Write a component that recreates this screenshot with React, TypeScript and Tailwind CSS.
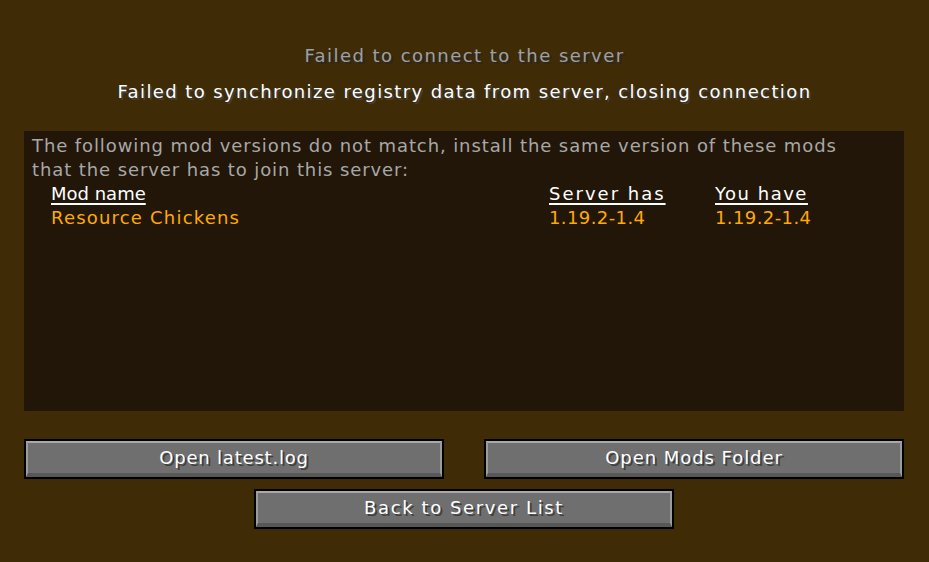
import type React from "react"

const shadowWhite = "[text-shadow:2px_2px_0_#3f3f3f]"

function McButton({ label, track, className }: { label: string; track: string; className?: string }) {
  return (
    <div className={"h-[40px] w-[420px] border-2 border-black bg-black " + (className ?? "")}>
      <div className="flex h-full items-center justify-center border-x-2 border-t-2 border-b-4 border-x-[#9c9c9c] border-t-[#a9a9a9] border-b-[#575757] bg-[#6f6f6f] pb-[1px]">
        <span className={"h-[24px] text-[18px] leading-[24px] text-white " + shadowWhite + " " + track}>{label}</span>
      </div>
    </div>
  )
}

function Line({ children, className }: { children: React.ReactNode; className?: string }) {
  return <div className={"h-[24px] whitespace-nowrap leading-[24px] " + (className ?? "")}>{children}</div>
}

export default function App() {
  return (
    <div className="h-[562px] w-[929px] overflow-hidden bg-[#3f2c06] font-['DejaVu_Sans',sans-serif] text-[18px]">
      {/* Header */}
      <div className="flex flex-col items-center pt-[44px]">
        <Line className="tracking-[1.45px] text-[#a0a0a0] [text-shadow:2px_2px_0_#282828]">
          Failed to connect to the server
        </Line>
        <Line className={"mt-[12px] tracking-[1.4px] text-white " + shadowWhite}>
          Failed to synchronize registry data from server, closing connection
        </Line>
      </div>

      {/* Mismatch list */}
      <div className="ml-[24px] mt-[27px] h-[280px] w-[880px] bg-[#211607] pl-[8px] pt-[3px] text-[#a8a8a8]">
        <Line className="tracking-[0.9px]">
          The following mod versions do not match, install the same version of these mods
        </Line>
        <Line className="tracking-[0.9px]">that the server has to join this server:</Line>
        <div className="grid grid-cols-[498px_166px_1fr] pl-[19px]">
          <Line className="text-white">
            <span className="underline decoration-2 underline-offset-[3px]">Mod name</span>
          </Line>
          <Line className="text-white">
            <span className="tracking-[2px] underline decoration-2 underline-offset-[3px]">Server has</span>
          </Line>
          <Line className="text-white">
            <span className="tracking-[1.5px] underline decoration-2 underline-offset-[3px]">You have</span>
          </Line>
          <Line className="tracking-[1.2px] text-[#ffaa00]">Resource Chickens</Line>
          <Line className="tracking-[0.4px] text-[#ffaa00]">1.19.2-1.4</Line>
          <Line className="tracking-[0.4px] text-[#ffaa00]">1.19.2-1.4</Line>
        </div>
      </div>

      {/* Buttons */}
      <div className="ml-[24px] mt-[28px] flex w-[880px] flex-col items-center gap-[10px]">
        <div className="flex w-full justify-between">
          <McButton label="Open latest.log" track="tracking-[0.8px]" />
          <McButton label="Open Mods Folder" track="tracking-[0.95px]" />
        </div>
        <McButton label="Back to Server List" track="tracking-[1.6px]" />
      </div>
    </div>
  )
}
